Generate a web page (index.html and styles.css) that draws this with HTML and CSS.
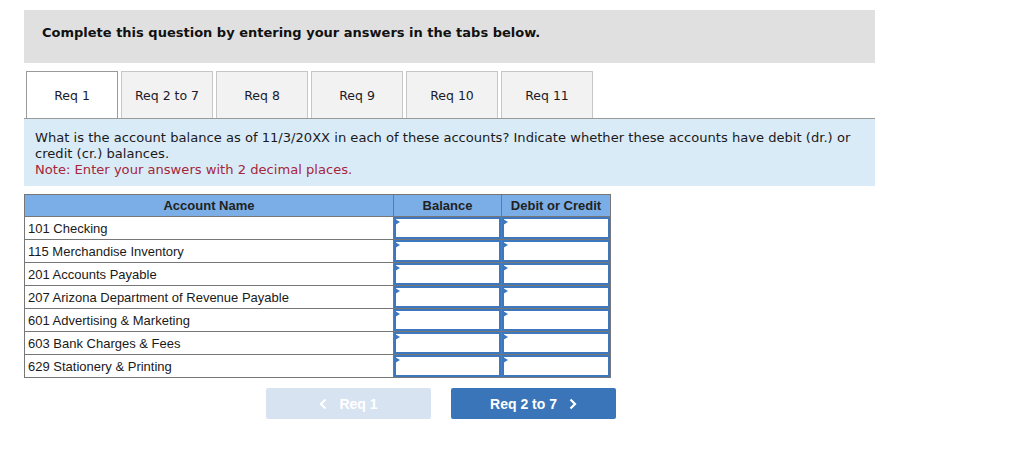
FILE: index.html
```html
<!DOCTYPE html>
<html>
<head>
<meta charset="utf-8">
<link rel="stylesheet" href="styles.css">
</head>
<body>
<div class="wrap">
  <div class="header">Complete this question by entering your answers in the tabs below.</div>
  <div class="tabs">
    <div class="tab active">Req 1</div>
    <div class="tab">Req 2 to 7</div>
    <div class="tab">Req 8</div>
    <div class="tab">Req 9</div>
    <div class="tab">Req 10</div>
    <div class="tab">Req 11</div>
  </div>
  <div class="panel">
    <p>What is the account balance as of 11/3/20XX in each of these accounts? Indicate whether these accounts have debit (dr.) or credit (cr.) balances.</p>
    <p class="note">Note: Enter your answers with 2 decimal places.</p>
  </div>
  <table class="grid">
    <thead>
      <tr><th class="c-name">Account Name</th><th class="c-bal">Balance</th><th class="c-dc">Debit or Credit</th></tr>
    </thead>
    <tbody>
      <tr><td class="name">101 Checking</td><td class="inp"><div class="box"></div></td><td class="inp"><div class="box"></div></td></tr>
      <tr><td class="name">115 Merchandise Inventory</td><td class="inp"><div class="box"></div></td><td class="inp"><div class="box"></div></td></tr>
      <tr><td class="name">201 Accounts Payable</td><td class="inp"><div class="box"></div></td><td class="inp"><div class="box"></div></td></tr>
      <tr><td class="name">207 Arizona Department of Revenue Payable</td><td class="inp"><div class="box"></div></td><td class="inp"><div class="box"></div></td></tr>
      <tr><td class="name">601 Advertising &amp; Marketing</td><td class="inp"><div class="box"></div></td><td class="inp"><div class="box"></div></td></tr>
      <tr><td class="name">603 Bank Charges &amp; Fees</td><td class="inp"><div class="box"></div></td><td class="inp"><div class="box"></div></td></tr>
      <tr><td class="name">629 Stationery &amp; Printing</td><td class="inp"><div class="box"></div></td><td class="inp"><div class="box"></div></td></tr>
    </tbody>
  </table>
  <div class="nav">
    <div class="btn prev"><svg class="chev" width="8" height="12" viewBox="0 0 8 12"><path d="M6.5 1.5 L2 6 L6.5 10.5" fill="none" stroke="#fff" stroke-width="2.2"/></svg><span>Req 1</span></div>
    <div class="btn next"><span>Req 2 to 7</span><svg class="chev" width="8" height="12" viewBox="0 0 8 12"><path d="M1.5 1.5 L6 6 L1.5 10.5" fill="none" stroke="#fff" stroke-width="2.2"/></svg></div>
  </div>
</div>
</body>
</html>
```
FILE: styles.css
```css
html, body { margin: 0; padding: 0; background: #fff; }
body { font-family: "DejaVu Sans", Verdana, sans-serif; color: #1a1a1a; }
.wrap { padding: 10px 0 0 24px; width: 851px; }
.header {
  height: 53px; background: #e0e0e0; box-sizing: border-box;
  padding: 15px 0 0 18px; font-weight: bold; font-size: 13px; color: #111;
}
.tabs {
  margin-top: 8px; display: flex; gap: 3px; padding-left: 2px;
  border-bottom: 1px solid #9a9a9a; height: 47px;
}
.tab {
  width: 92px; height: 47px; box-sizing: border-box;
  background: #f2f2f2; border: 1px solid #c6c6c6; border-bottom: none;
  display: flex; align-items: center; justify-content: center;
  font-size: 12.5px; color: #1a1a2a;
}
.tab.active { background: #fff; border-color: #9a9a9a; }
.panel {
  background: #daebf8; height: 67px; box-sizing: border-box;
  padding: 11px 11px 0 11px; font-size: 13.1px; line-height: 16px; color: #1a1a1a;
}
.panel p { margin: 0; }
.panel .note { color: #a4273b; }
.grid {
  margin-top: 8px; border-collapse: collapse; font-family: "Liberation Sans", Arial, sans-serif;
  font-size: 13px; color: #1a1a1a;
}
.grid th {
  background: #7baee6; height: 22px; padding: 0; font-weight: bold; color: #222;
  border: 1px solid #777; box-sizing: border-box;
}
.c-name { width: 369px; }
.c-bal { width: 108px; }
.c-dc { width: 109px; }
.grid td { border: 1px solid #777; height: 23px; box-sizing: border-box; padding: 0; }
.grid td.name { padding: 0 0 0 3px; }
.grid td.inp { padding: 0; }
.box {
  height: 22px; box-sizing: border-box; border: 2px solid #3d77bd;
  background: #fff; position: relative;
}
.box::before {
  content: ""; position: absolute; left: -1px; top: 0px;
  border-left: 5px solid #3d77bd; border-top: 3px solid transparent; border-bottom: 3px solid transparent;
}
.nav { display: flex; gap: 20px; margin: 10px 0 0 242px; }
.btn {
  width: 165px; height: 31px; border-radius: 2px; display: flex; align-items: center; justify-content: center;
  gap: 12px; color: #fff; font-family: "Liberation Sans", Arial, sans-serif; font-weight: bold; font-size: 14px;
}
.btn.prev { background: #d7e3f1; }
.btn.next { background: #3a75b9; }
.chev { display: block; }
```
